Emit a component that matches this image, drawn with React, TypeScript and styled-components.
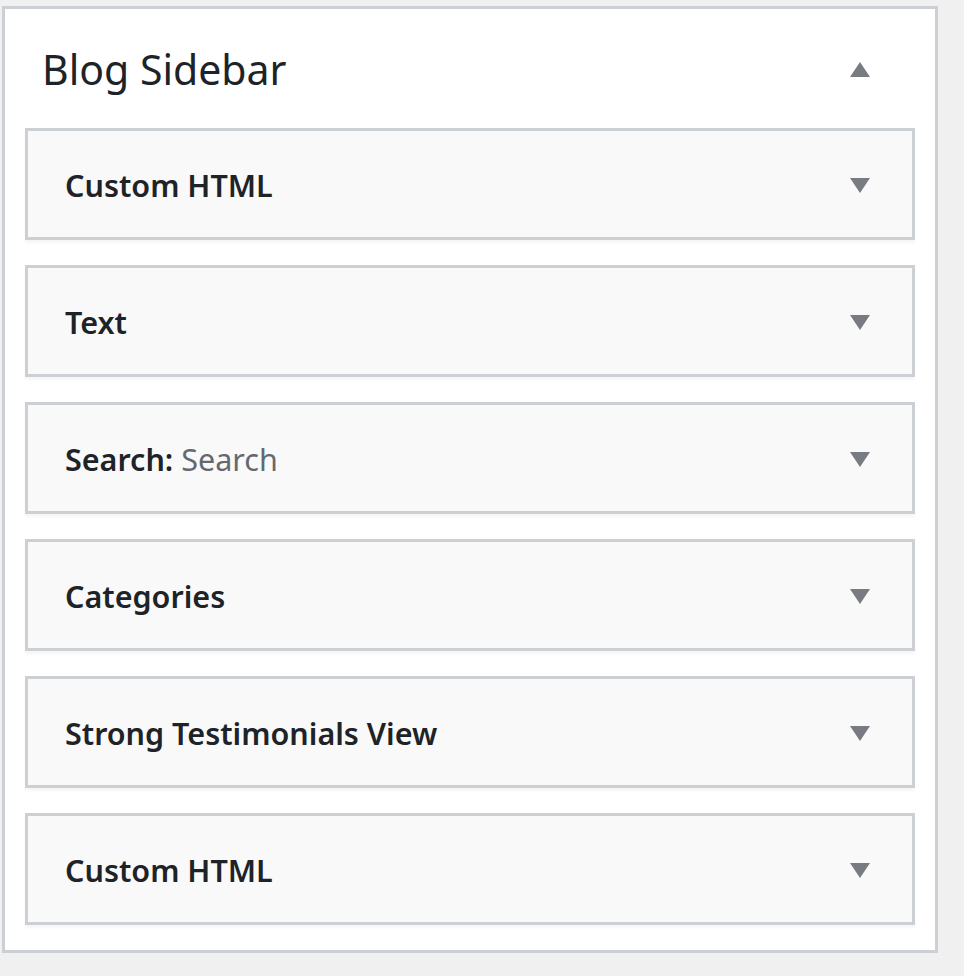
import React from "react";
import styled, { createGlobalStyle } from "styled-components";

const Global = createGlobalStyle`
  html, body { margin: 0; padding: 0; background: #f0f0f1; }
  body { font-family: "Noto Sans", "Open Sans", sans-serif; color: #1d2327; }
`;

const Page = styled.div`
  padding: 6px 0 0 2px;
`;

const Panel = styled.section`
  box-sizing: border-box;
  width: 936px;
  height: 947px;
  background: #ffffff;
  border: 3px solid #ccd0d4;
  padding: 0 20px 25px 20px;
  display: flex;
  flex-direction: column;
`;

const Header = styled.div`
  height: 119px;
  display: flex;
  align-items: center;
  justify-content: space-between;
  padding: 2px 45px 0 17px;
  box-sizing: border-box;
`;

const Title = styled.h2`
  margin: 0;
  font-size: 41px;
  font-weight: 400;
  color: #1d2327;
  line-height: 1;
`;

const List = styled.div`
  display: flex;
  flex-direction: column;
  gap: 25px;
`;

const Widget = styled.div`
  box-sizing: border-box;
  height: 112px;
  background: #f9f9f9;
  border: 3px solid #ccd0d4;
  box-shadow: 0 3px 3px rgba(0, 0, 0, 0.04);
  display: flex;
  align-items: center;
  justify-content: space-between;
  padding: 2px 42px 0 37px;
`;

const WidgetTitle = styled.h3`
  margin: 0;
  font-size: 30.5px;
  font-weight: 600;
  color: #1d2327;
  line-height: 1;
`;

const InTitle = styled.span`
  font-weight: 400;
  color: #646970;
`;

const Arrow = styled.svg`
  width: 20px;
  height: 15px;
  fill: #787c82;
  flex: none;
`;

const Toggle = ({ up }: { up?: boolean }) => (
  <Arrow viewBox="0 0 20 15">
    {up ? <polygon points="10,0 20,15 0,15" /> : <polygon points="0,0 20,0 10,15" />}
  </Arrow>
);

const widgets: { name: string; sub?: string }[] = [
  { name: "Custom HTML" },
  { name: "Text" },
  { name: "Search", sub: "Search" },
  { name: "Categories" },
  { name: "Strong Testimonials View" },
  { name: "Custom HTML" },
];

export default function App() {
  return (
    <>
      <Global />
      <Page>
        <Panel>
          <Header>
            <Title>Blog Sidebar</Title>
            <Toggle up />
          </Header>
          <List>
            {widgets.map((w, i) => (
              <Widget key={i}>
                <WidgetTitle>
                  {w.name}
                  {w.sub && (
                    <>
                      : <InTitle>{w.sub}</InTitle>
                    </>
                  )}
                </WidgetTitle>
                <Toggle />
              </Widget>
            ))}
          </List>
        </Panel>
      </Page>
    </>
  );
}
